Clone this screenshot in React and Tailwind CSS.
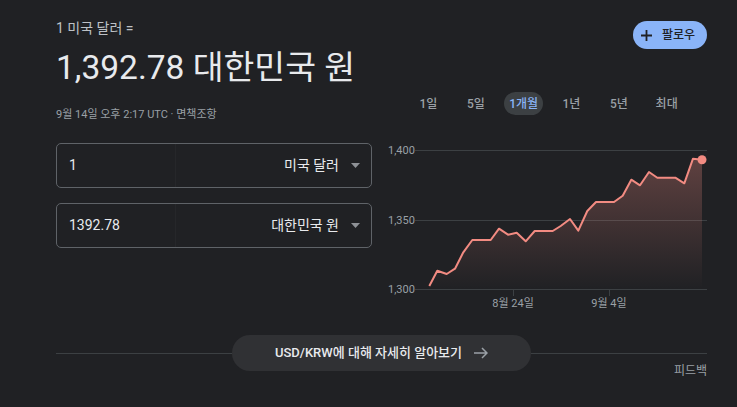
import React from 'react'

const points = [
    [41.3, 146], [49.3, 130.7], [58.7, 134], [67, 128.7], [75.3, 112.3], [84.3, 100], [102.7, 100],
    [111, 88.7], [120, 94.7], [128.7, 92.7], [137.7, 101.3], [146.7, 91], [164.7, 91], [172.7, 86],
    [182, 79], [190.3, 90.7], [199.3, 71], [208, 62], [226, 62], [234.7, 55.7], [243.3, 39.7],
    [252, 45.3], [261, 32], [269.3, 37.7], [287.3, 37.7], [296.3, 43.3], [305, 18.7], [314, 19.7],
]

const tabs = ['1일', '5일', '1개월', '1년', '5년', '최대']

function Caret() {
    return (
        <svg width="9" height="5" viewBox="0 0 9 5" className="ml-[12px] shrink-0">
            <path d="M0 0h9L4.5 5z" fill="#8e9196" />
        </svg>
    )
}

function CurrencyField({ value, currency }) {
    return (
        <div className="flex h-[45px] items-stretch rounded-[5px] border border-[#5f6368]">
            <div className="flex w-[119px] items-center border-r border-[#26272a] pl-[12px] text-[14px] text-[#e8eaed]">
                {value}
            </div>
            <div className="flex flex-1 items-center justify-end pr-[11px] text-[14px] text-[#e8eaed]">
                <span>{currency}</span>
                <Caret />
            </div>
        </div>
    )
}

function RateChart() {
    const line = points.map(([x, y]) => `${x},${y}`).join(' ')
    const area = `M${points[0][0]},149 L${line.replace(/ /g, ' L')} L${points[points.length - 1][0]},149 Z`
    const last = points[points.length - 1]
    return (
        <svg width="319" height="170" viewBox="0 0 319 170" className="block">
            <defs>
                <linearGradient id="fade" x1="0" y1="0" x2="0" y2="1">
                    <stop offset="0" stopColor="#f28b82" stopOpacity="0.3" />
                    <stop offset="1" stopColor="#f28b82" stopOpacity="0" />
                </linearGradient>
            </defs>
            <g stroke="#3c4043" strokeWidth="1">
                <line x1="27" y1="10.5" x2="319" y2="10.5" />
                <line x1="27" y1="80.5" x2="319" y2="80.5" />
                <line x1="27" y1="149.5" x2="319" y2="149.5" />
                <line x1="125.5" y1="150" x2="125.5" y2="156" />
                <line x1="221.5" y1="150" x2="221.5" y2="156" />
            </g>
            <g fill="#9aa0a6" fontSize="11" fontFamily="Roboto, 'Noto Sans CJK KR', sans-serif">
                <text x="0" y="14">1,400</text>
                <text x="0" y="84">1,350</text>
                <text x="0" y="153">1,300</text>
                <text x="125" y="167" textAnchor="middle">8월 24일</text>
                <text x="221" y="167" textAnchor="middle">9월 4일</text>
            </g>
            <path d={area} fill="url(#fade)" />
            <polyline points={line} fill="none" stroke="#f28b82" strokeWidth="2" strokeLinejoin="round" />
            <circle cx={last[0]} cy={last[1]} r="4.5" fill="#f28b82" />
        </svg>
    )
}

export default function App() {
    return (
        <div className="min-h-[407px] w-[737px] bg-[#202124] pl-[56px] pr-[30px] font-['Roboto','Noto_Sans_CJK_KR',sans-serif] text-[#e8eaed]">
            {/* Header */}
            <div className="flex items-start justify-between">
                <div>
                    <div className="mt-[18px] text-[14px] leading-[20px] text-[#bdc1c6]">1 미국 달러 =</div>
                    <div className="mt-[8px] text-[33.5px] leading-[44px] text-[#e8eaed]">1,392.78 대한민국 원</div>
                </div>
                <button className="mt-[21px] flex h-[28px] items-center gap-[10px] rounded-full bg-[#8ab4f8] pl-[8px] pr-[12px] text-[12px] font-medium text-[#202124]">
                    <svg width="11" height="11" viewBox="0 0 11 11">
                        <path d="M5.5 0v11M0 5.5h11" stroke="#202124" strokeWidth="1.8" />
                    </svg>
                    팔로우
                </button>
            </div>

            {/* Converter + chart */}
            <div className="grid grid-cols-[316px_319px] gap-x-[16px]">
                <div>
                    <div className="mt-[17px] text-[11px] leading-[16px] text-[#9aa0a6]">9월 14일 오후 2:17 UTC · 면책조항</div>
                    <div className="mt-[20px] flex flex-col gap-[15px]">
                        <CurrencyField value="1" currency="미국 달러" />
                        <CurrencyField value="1392.78" currency="대한민국 원" />
                    </div>
                </div>
                <div>
                    <div className="mx-auto mt-[2px] grid w-[286px] grid-cols-6">
                        {tabs.map((t) => (
                            <div key={t} className="flex justify-center">
                                <span
                                    className={
                                        t === '1개월'
                                            ? 'flex h-[23px] items-center rounded-full bg-[#3c4043] px-[5px] text-[12px] font-medium text-[#8ab4f8]'
                                            : 'flex h-[23px] items-center px-[5px] text-[12px] font-medium text-[#9aa0a6]'
                                    }
                                >
                                    {t}
                                </span>
                            </div>
                        ))}
                    </div>
                    <div className="mt-[25px]">
                        <RateChart />
                    </div>
                </div>
            </div>

            {/* Learn more */}
            <div className="mt-[25px] flex items-center">
                <div className="h-px flex-1 bg-[#3c4043]" />
                <button className="flex h-[36px] w-[299px] items-center justify-center gap-[12px] rounded-full bg-[#303134] text-[13px] font-medium text-[#e8eaed]">
                    USD/KRW에 대해 자세히 알아보기
                    <svg width="14" height="12" viewBox="0 0 14 12">
                        <path d="M0 6h13M8 1l5 5-5 5" fill="none" stroke="#9aa0a6" strokeWidth="1.5" />
                    </svg>
                </button>
                <div className="h-px flex-1 bg-[#3c4043]" />
            </div>
            <div className="-mt-[8px] text-right text-[12px] leading-[16px] text-[#9aa0a6]">피드백</div>
        </div>
    )
}
